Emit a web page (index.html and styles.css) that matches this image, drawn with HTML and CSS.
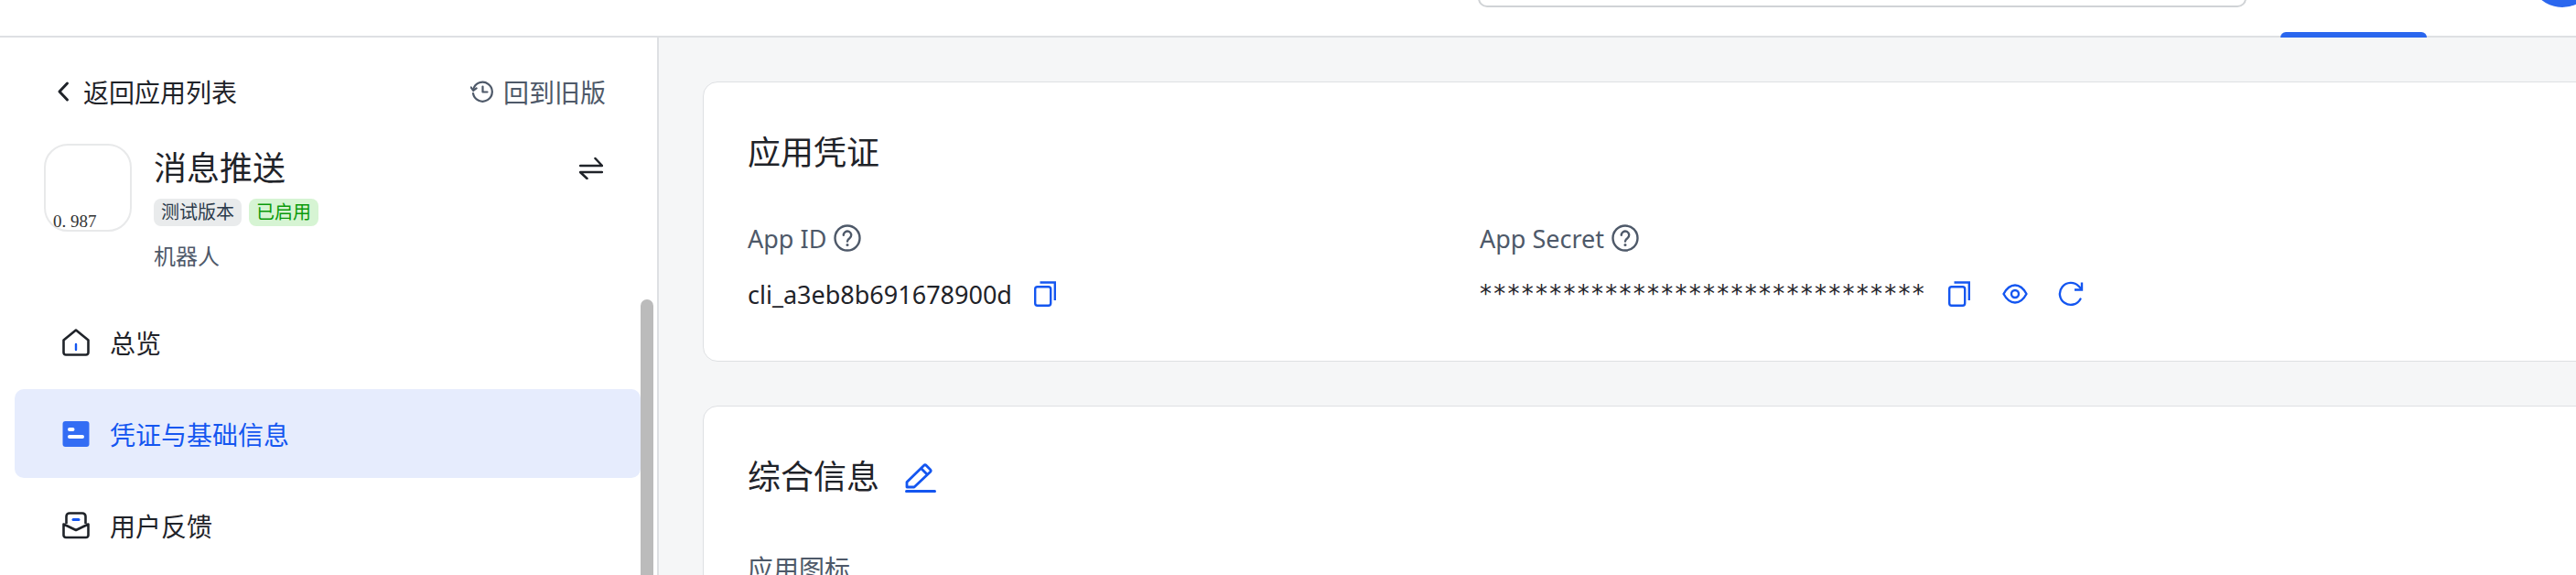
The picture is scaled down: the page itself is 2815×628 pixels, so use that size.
FILE: index.html
```html
<!DOCTYPE html>
<html lang="zh-CN">
<head>
    <meta charset="UTF-8">
    <title>凭证与基础信息</title>
    <link rel="stylesheet" href="styles.css">
</head>
<body>
    <header class="topbar">
        <div class="search"></div>
        <div class="avatar"></div>
        <div class="tab-mark"></div>
    </header>

    <div class="layout">
        <aside class="sidebar">
            <div class="side-top">
                <a class="back">
                    <svg class="icon-back" viewBox="0 0 14 24"><path d="M11.500 3 3 12l8.500 9" fill="none" stroke="#1f2329" stroke-width="3" stroke-linecap="round" stroke-linejoin="round"/></svg>
                    <span>返回应用列表</span>
                </a>
                <a class="old">
                    <svg class="icon-clock" viewBox="0 0 26 26"><path d="M3.200 10.500A10.500 10.500 0 1 1 3 15" fill="none" stroke="#4e5969" stroke-width="2.200" stroke-linecap="round"/><path d="M0.800 8.500 3.200 12l3.400-2.600" fill="none" stroke="#4e5969" stroke-width="2.200" stroke-linecap="round" stroke-linejoin="round"/><path d="M13.500 7.500V13.500H18.500" fill="none" stroke="#4e5969" stroke-width="2.200" stroke-linecap="round" stroke-linejoin="round"/></svg>
                    <span>回到旧版</span>
                </a>
            </div>

            <div class="app-row">
                <div class="app-icon"><span>0. 987</span></div>
                <div class="app-info">
                    <div class="app-name">消息推送</div>
                    <div class="badges">
                        <span class="badge badge-gray">测试版本</span>
                        <span class="badge badge-green">已启用</span>
                    </div>
                    <div class="app-type">机器人</div>
                </div>
                <svg class="icon-swap" viewBox="0 0 26 25"><path d="M1 10H25L17.500 2M25 17H1L8.500 24" fill="none" stroke="#1f2329" stroke-width="2.500" stroke-linecap="round" stroke-linejoin="round"/></svg>
            </div>

            <nav class="nav">
                <a class="nav-item">
                    <svg class="nav-icon" viewBox="0 0 30 30"><path d="M15 1.500 28.500 12.500V26a2.500 2.500 0 0 1-2.500 2.500H4A2.500 2.500 0 0 1 1.500 26V12.500Z" fill="none" stroke="#1f2329" stroke-width="2.600" stroke-linejoin="round"/><path d="M15 17v6" stroke="#1456f0" stroke-width="2.400" stroke-linecap="round"/></svg>
                    <span>总览</span>
                </a>
                <a class="nav-item active">
                    <svg class="nav-icon" viewBox="0 0 30 30"><rect x="0.500" y="1" width="29" height="28" rx="3" fill="#336df4"/><rect x="6" y="8" width="7.500" height="4" rx="2" fill="#fff"/><rect x="6" y="16" width="18" height="4" rx="2" fill="#fff"/></svg>
                    <span>凭证与基础信息</span>
                </a>
                <a class="nav-item">
                    <svg class="nav-icon" viewBox="0 0 30 30"><path d="M4.500 13V5a3.500 3.500 0 0 1 3.500-3.500h14A3.500 3.500 0 0 1 25.500 5V13" fill="none" stroke="#1f2329" stroke-width="2.600"/><path d="M1.500 13.500 15 20l13.500-6.500V25.500a2.500 2.500 0 0 1-2.500 2.500H4a2.500 2.500 0 0 1-2.500-2.500Z" fill="none" stroke="#1f2329" stroke-width="2.600" stroke-linejoin="round"/><path d="M12 8.500h6" stroke="#1456f0" stroke-width="3" stroke-linecap="round"/></svg>
                    <span>用户反馈</span>
                </a>
            </nav>

            <div class="scroll-thumb"></div>
        </aside>

        <main class="main">
            <section class="card">
                <h2 class="card-title">应用凭证</h2>
                <div class="fields">
                    <div class="field">
                        <div class="field-label">
                            <span>App ID</span>
                            <svg class="icon-help" viewBox="0 0 30 30"><circle cx="15" cy="15" r="13.500" fill="none" stroke="#4e5969" stroke-width="2.400"/><path d="M10.800 11.800a4.200 4.200 0 1 1 6.600 3.400c-1.500 1-2.400 1.800-2.400 3.400" fill="none" stroke="#4e5969" stroke-width="2.400" stroke-linecap="round"/><circle cx="15" cy="22.500" r="1.500" fill="#4e5969"/></svg>
                        </div>
                        <div class="field-value">
                            <span>cli_a3eb8b691678900d</span>
                            <svg class="icon-copy" viewBox="0 0 24 28"><rect x="1.200" y="6.200" width="17" height="20.600" rx="2.500" fill="none" stroke="#1456f0" stroke-width="2.400"/><path d="M6.500 1.500H22.800V21" fill="none" stroke="#1456f0" stroke-width="2.400"/></svg>
                        </div>
                    </div>
                    <div class="field">
                        <div class="field-label">
                            <span>App Secret</span>
                            <svg class="icon-help" viewBox="0 0 30 30"><circle cx="15" cy="15" r="13.500" fill="none" stroke="#4e5969" stroke-width="2.400"/><path d="M10.800 11.800a4.200 4.200 0 1 1 6.600 3.400c-1.500 1-2.400 1.800-2.400 3.400" fill="none" stroke="#4e5969" stroke-width="2.400" stroke-linecap="round"/><circle cx="15" cy="22.500" r="1.500" fill="#4e5969"/></svg>
                        </div>
                        <div class="field-value">
                            <span class="secret">********************************</span>
                            <svg class="icon-copy" viewBox="0 0 24 28"><rect x="1.200" y="6.200" width="17" height="20.600" rx="2.500" fill="none" stroke="#1456f0" stroke-width="2.400"/><path d="M6.500 1.500H22.800V21" fill="none" stroke="#1456f0" stroke-width="2.400"/></svg>
                            <svg class="icon-eye" viewBox="0 0 28 22"><path d="M1.500 11C5 4.500 9.500 1.500 14 1.500S23 4.500 26.500 11C23 17.500 18.500 20.500 14 20.500S5 17.500 1.500 11Z" fill="none" stroke="#1456f0" stroke-width="2.400" stroke-linejoin="round"/><circle cx="14" cy="11" r="4" fill="none" stroke="#1456f0" stroke-width="2.400"/></svg>
                            <svg class="icon-refresh" viewBox="0 0 28 28"><path d="M24.500 19.500A12 12 0 1 1 22.500 5.500L25.500 8.500" fill="none" stroke="#1456f0" stroke-width="2.400" stroke-linecap="round"/><path d="M26 1.500V9.500H18" fill="none" stroke="#1456f0" stroke-width="2.400"/></svg>
                        </div>
                    </div>
                </div>
            </section>

            <section class="card">
                <h2 class="card-title">
                    <span>综合信息</span>
                    <svg class="icon-edit" viewBox="0 0 34 34"><path d="M2 22.500 20.500 4.500a2 2 0 0 1 2.800 0l4.200 4.200a2 2 0 0 1 0 2.800L10 28H2Z" fill="none" stroke="#1456f0" stroke-width="2.800" stroke-linejoin="round"/><path d="M17.500 7.500 24.500 14.500" stroke="#1456f0" stroke-width="2.800"/><path d="M1.500 32.500h31" stroke="#1456f0" stroke-width="3" stroke-linecap="round"/></svg>
                </h2>
                <div class="section-label">应用图标</div>
            </section>
        </main>
    </div>
</body>
</html>
```

FILE: styles.css
```css
html, body {
    height: 100%;
    margin: 0;
    overflow: hidden;
}

body {
    font-family: "Noto Sans", "Noto Sans CJK SC", sans-serif;
    color: #1f2329;
    background-color: #fff;
    display: flex;
    flex-direction: column;
}

/* Top bar */
.topbar {
    position: relative;
    flex: none;
    display: flex;
    align-items: flex-start;
    box-sizing: border-box;
    height: 41px;
    padding-left: 1615px;
    border-bottom: 2px solid #dee0e3;
}

.search {
    box-sizing: border-box;
    width: 840px;
    height: 40px;
    margin-top: -32px;
    border: 2px solid #d0d3d6;
    border-radius: 10px;
}

.avatar {
    flex: none;
    width: 72px;
    height: 72px;
    margin-top: -64px;
    margin-left: auto;
    margin-right: -21px;
    border-radius: 50%;
    background-color: #2b67ee;
}

.tab-mark {
    position: absolute;
    left: 2492px;
    bottom: -2px;
    width: 160px;
    height: 6px;
    border-radius: 6px 6px 0 0;
    background-color: #2b67ee;
}

.layout {
    flex: 1;
    display: flex;
    min-height: 0;
}

/* Sidebar */
.sidebar {
    position: relative;
    flex: none;
    box-sizing: border-box;
    width: 720px;
    border-right: 2px solid #dee0e3;
    overflow: hidden;
}

.side-top {
    display: flex;
    justify-content: space-between;
    align-items: center;
    height: 34px;
    padding: 42px 56px 0 62px;
    font-size: 28px;
}

.back, .old {
    display: flex;
    align-items: center;
}

.old {
    color: #4e5969;
}

.icon-back {
    width: 14px;
    height: 24px;
    margin-right: 15px;
}

.icon-clock {
    width: 26px;
    height: 26px;
    margin-right: 10px;
}

.app-row {
    display: flex;
    padding: 0 59px 0 48px;
    margin-top: 40px;
}

.app-icon {
    box-sizing: border-box;
    flex: none;
    display: flex;
    align-items: flex-end;
    width: 96px;
    height: 96px;
    padding-left: 8px;
    margin-right: 24px;
    border: 2px solid #e8e9ea;
    border-radius: 26px;
}

.app-icon span {
    font-family: "Liberation Serif", serif;
    font-size: 19px;
    line-height: 1;
    white-space: pre;
    color: #333;
}

.app-info {
    flex: 1;
}

.app-name {
    font-size: 36px;
    line-height: 54px;
}

.badges {
    display: flex;
    gap: 8px;
    margin-top: 6px;
}

.badge {
    height: 30px;
    padding: 0 8px;
    border-radius: 8px;
    font-size: 20px;
    line-height: 30px;
}

.badge-gray {
    background-color: #e9ebec;
    color: #2b3a4a;
}

.badge-green {
    background-color: #d6f4d3;
    color: #0a9a0a;
}

.app-type {
    margin-top: 17px;
    font-size: 24px;
    line-height: 32px;
    color: #4e5969;
}

.icon-swap {
    flex: none;
    width: 26px;
    height: 25px;
    margin-top: 14px;
}

.nav {
    margin: 29px 18px 0 16px;
    display: flex;
    flex-direction: column;
    gap: 3px;
}

.nav-item {
    display: flex;
    align-items: center;
    gap: 22px;
    height: 97px;
    padding-left: 52px;
    border-radius: 10px;
    font-size: 28px;
}

.nav-item.active {
    background-color: #e6ecfd;
    color: #1456f0;
}

.nav-icon {
    width: 30px;
    height: 30px;
}

.scroll-thumb {
    position: absolute;
    left: 700px;
    top: 286px;
    bottom: -20px;
    width: 14px;
    border-radius: 7px 7px 0 0;
    background-color: #bbbbbb;
}

/* Main content */
.main {
    flex: 1;
    min-width: 0;
    padding: 48px 0 0 48px;
    background-color: #f5f6f7;
    overflow: hidden;
}

.card {
    box-sizing: border-box;
    width: calc(100% + 20px);
    height: 306px;
    margin-bottom: 48px;
    padding: 52px 48px 0;
    background-color: #fff;
    border: 1px solid #dee0e3;
    border-radius: 16px;
}

.card-title {
    display: flex;
    align-items: center;
    gap: 28px;
    margin: 0;
    font-size: 36px;
    font-weight: 400;
    line-height: 50px;
}

.fields {
    display: grid;
    grid-template-columns: 800px 1fr;
    margin-top: 50px;
}

.field-label {
    display: flex;
    align-items: center;
    gap: 8px;
    height: 36px;
    font-size: 27px;
    color: #4e5969;
}

.field-value {
    display: flex;
    align-items: center;
    height: 36px;
    margin-top: 25px;
    font-size: 27px;
}

.secret {
    font-family: "DejaVu Sans", sans-serif;
    font-size: 26px;
    letter-spacing: 2.250px;
}

.icon-help {
    width: 30px;
    height: 30px;
}

.icon-copy {
    width: 24px;
    height: 28px;
    margin-left: 24px;
}

.icon-eye {
    width: 28px;
    height: 22px;
    margin-left: 35px;
}

.icon-refresh {
    width: 28px;
    height: 28px;
    margin-left: 33px;
}

.icon-edit {
    width: 34px;
    height: 34px;
}

.section-label {
    margin-top: 57px;
    font-size: 28px;
    line-height: 36px;
    color: #4e5969;
}
```
